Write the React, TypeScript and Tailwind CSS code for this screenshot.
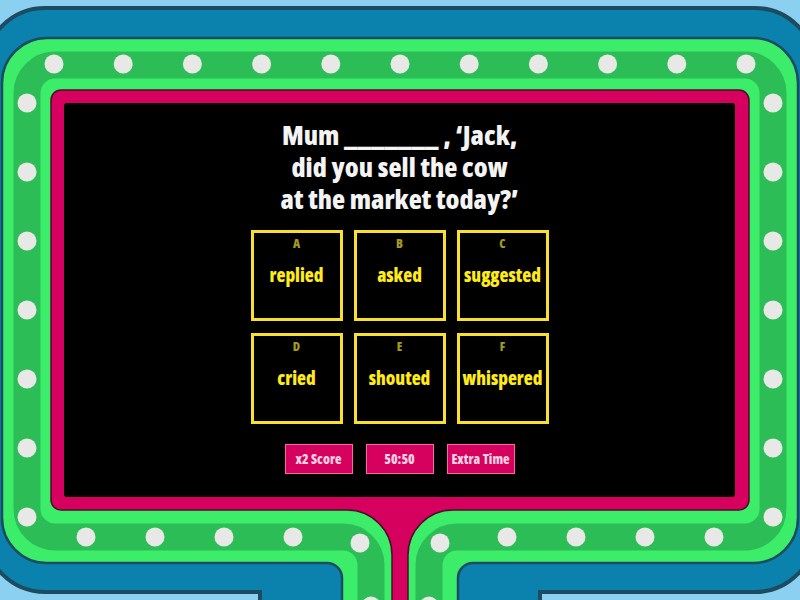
import React from 'react'

const FONT = { fontFamily: '"Open Sans", "Liberation Sans", sans-serif' }

const answers = [
  { key: 'A', word: 'replied' },
  { key: 'B', word: 'asked' },
  { key: 'C', word: 'suggested' },
  { key: 'D', word: 'cried' },
  { key: 'E', word: 'shouted' },
  { key: 'F', word: 'whispered' },
]

const powerUps = ['x2 Score', '50:50', 'Extra Time']

const question = ['Mum _______ , ‘Jack,', 'did you sell the cow', 'at the market today?’']

// dot positions around the frame
const dots: [number, number][] = [
  ...Array.from({ length: 11 }, (_, i) => [54 + 69.2 * i, 64] as [number, number]),
  ...[103, 172, 241, 310, 379, 448, 517].map((y) => [27, y] as [number, number]),
  ...[103, 172, 241, 310, 379, 448, 517].map((y) => [773, y] as [number, number]),
  [86, 537], [155, 537], [224, 537], [293, 537], [360, 543],
  [440, 543], [507, 537], [576, 537], [645, 537], [714, 537],
  [371, 606], [429, 606],
]

function Frame() {
  return (
    <svg className="absolute inset-0" width="800" height="600" viewBox="0 0 800 600">
      <rect width="800" height="600" fill="#8bd0f1" />
      {/* outer blue band */}
      <path
        d="M -15 67 A 60 60 0 0 1 45 8 L 755 8 A 60 60 0 0 1 815 67 L 815 532 A 60 60 0 0 1 755 592 L 540 592 L 540 620 L 260 620 L 260 592 L 45 592 A 60 60 0 0 1 -15 532 Z"
        fill="#0a82ad"
        stroke="#1d4b60"
        strokeWidth="4"
      />
      {/* green band */}
      <path
        d="M 47 38 L 753 38 A 45 45 0 0 1 798 83 L 798 518 A 45 45 0 0 1 753 563 L 473 563 A 15 15 0 0 0 458 578 L 458 620 L 342 620 L 342 578 A 15 15 0 0 0 327 563 L 47 563 A 45 45 0 0 1 2 518 L 2 83 A 45 45 0 0 1 47 38 Z"
        fill="#3ced6a"
        stroke="#1d4b60"
        strokeWidth="2.5"
      />
      {/* darker light strip */}
      <path
        d="M 371 620 L 371 565 A 28 28 0 0 0 343 537 L 55 537 A 28 28 0 0 1 27 509 L 27 93 A 28 28 0 0 1 55 65 L 745 65 A 28 28 0 0 1 773 93 L 773 509 A 28 28 0 0 1 745 537 L 457 537 A 28 28 0 0 0 429 565 L 429 620"
        fill="none"
        stroke="#2dbd57"
        strokeWidth="27"
      />
      {dots.map(([x, y], i) => (
        <circle key={i} cx={x} cy={y} r="9.5" fill="#e8e8e6" />
      ))}
      {/* magenta screen border with stem */}
      <path
        d="M 61 90 L 739 90 A 10 10 0 0 1 749 100 L 749 500 A 10 10 0 0 1 739 510 L 453 510 A 45 45 0 0 0 408 555 L 408 620 L 392 620 L 392 555 A 45 45 0 0 0 347 510 L 61 510 A 10 10 0 0 1 51 500 L 51 100 A 10 10 0 0 1 61 90 Z"
        fill="#d6005e"
        stroke="#4a0d2a"
        strokeWidth="1.5"
      />
    </svg>
  )
}

export default function App() {
  return (
    <div className="relative w-[800px] h-[600px] overflow-hidden font-stretch-condensed" style={FONT}>
      <Frame />
      <div className="relative pt-[103px] pl-[64px]">
        <div className="w-[671px] h-[394px] bg-black rounded-[3px] flex flex-col items-center pt-[16px]">
          <div className="flex flex-col items-center text-[#f4f4f4] font-extrabold text-[27px] leading-[32px]">
            {question.map((line) => (
              <div key={line} className="h-[32px] whitespace-nowrap">{line}</div>
            ))}
          </div>

          <div className="mt-[15px] grid grid-cols-[92px_92px_92px] gap-x-[11px] gap-y-[12px]">
            {answers.map((a) => (
              <div
                key={a.key}
                className="h-[91px] border-[3px] border-[#f9e12b] flex flex-col items-center"
              >
                <span className="mt-[3px] text-[12.5px] leading-[15px] font-extrabold text-[#a39a1e]">{a.key}</span>
                <span className="mt-[13px] text-[18.5px] leading-[22px] font-extrabold text-[#ffea1c]">{a.word}</span>
              </div>
            ))}
          </div>

          <div className="mt-[20px] flex gap-[13px]">
            {powerUps.map((p) => (
              <div
                key={p}
                className="w-[68px] h-[30px] bg-[#d6005e] border-[1.5px] border-[#f46aa3] flex items-center justify-center text-[13.5px] font-extrabold text-[#f7d2e2]"
              >
                {p}
              </div>
            ))}
          </div>
        </div>
      </div>
    </div>
  )
}
